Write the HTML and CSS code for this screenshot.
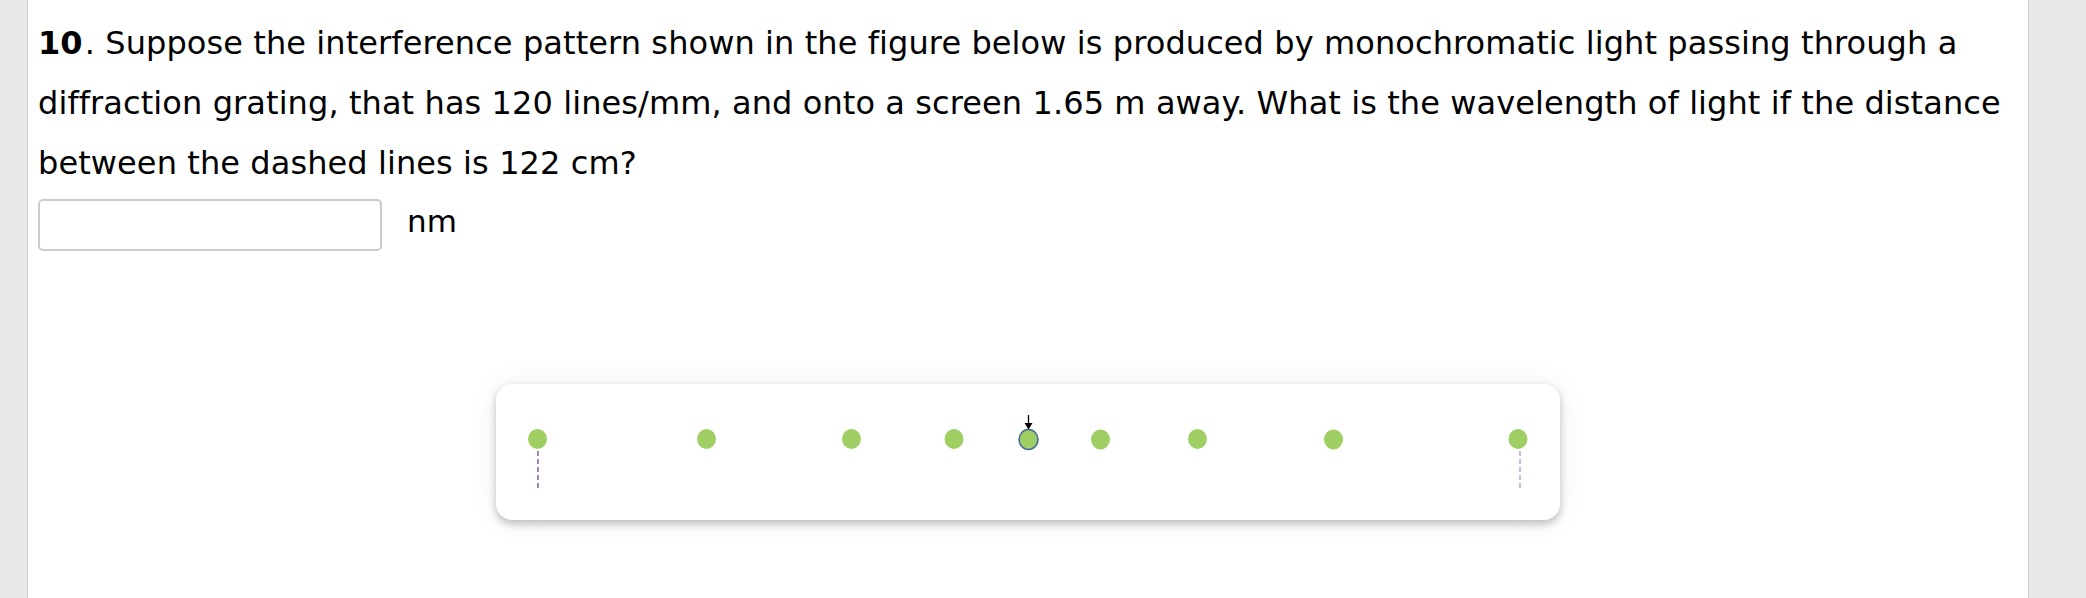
FILE: index.html
```html
<!DOCTYPE html>
<html lang="en">
<head>
<meta charset="utf-8">
<title>Question 10</title>
<link rel="stylesheet" href="styles.css">
</head>
<body class="page">
  <aside class="gutter gutter-left"></aside>
  <main class="content">
    <p class="question"><b class="qnum">10</b>. Suppose the interference pattern shown in the figure below is produced by monochromatic light passing through a diffraction grating, that has 120 lines/mm, and onto a screen 1.65 m away. What is the wavelength of light if the distance between the dashed lines is 122 cm?</p>
    <div class="answer">
      <input class="answer-input" type="text" aria-label="answer">
      <span class="unit">nm</span>
    </div>
    <figure class="figure-card">
      <svg class="pattern" width="1064" height="136" viewBox="0 0 1064 136">
        <line x1="42" y1="67" x2="42" y2="105" stroke="#6b4791" stroke-width="1.3" stroke-dasharray="5 3"/>
        <line x1="1024" y1="67" x2="1024" y2="105" stroke="#ad93d2" stroke-width="1.3" stroke-dasharray="5 3"/>
        <g fill="#9fcf62">
          <ellipse cx="41.5" cy="55" rx="9.5" ry="10"/>
          <ellipse cx="210.5" cy="55" rx="9.5" ry="10"/>
          <ellipse cx="355.5" cy="55" rx="9.5" ry="10"/>
          <ellipse cx="458" cy="55" rx="9.5" ry="10"/>
          <ellipse cx="604.5" cy="55.5" rx="9.5" ry="10"/>
          <ellipse cx="701.5" cy="55" rx="9.5" ry="10"/>
          <ellipse cx="837.5" cy="55.5" rx="9.5" ry="10"/>
          <ellipse cx="1022" cy="55" rx="9.5" ry="10"/>
        </g>
        <ellipse cx="532.5" cy="55.5" rx="9.5" ry="10" fill="#9fcf62" stroke="#4b6a9e" stroke-width="1.6"/>
        <line x1="532.5" y1="31" x2="532.5" y2="40" stroke="#000" stroke-width="1.3"/>
        <polygon points="528.5,39 536.5,39 532.5,45.5" fill="#000"/>
      </svg>
    </figure>
  </main>
  <aside class="gutter gutter-right"></aside>
</body>
</html>
```

FILE: styles.css
```css
html, body {
  margin: 0;
  padding: 0;
  height: 100%;
}

.page {
  display: flex;
  min-height: 598px;
  background: #ffffff;
  font-family: "DejaVu Sans", Verdana, sans-serif;
  color: #000;
}

.gutter {
  background: #e8e8e8;
  flex: 0 0 auto;
}

.gutter-left {
  width: 27px;
  border-right: 1px solid #c9d1cf;
}

.gutter-right {
  flex: 1 1 auto;
  border-left: 1px solid #c9d1cf;
}

.content {
  width: 2000px;
  box-sizing: border-box;
  padding: 13px 10px 0 10px;
  background: #fff;
}

.question {
  margin: 0;
  font-size: 32px;
  line-height: 60px;
  letter-spacing: 0.09px;
}

.qnum {
  font-weight: bold;
  margin-right: 2px;
}

.answer {
  display: flex;
  align-items: center;
  margin-top: 6px;
}

.answer-input {
  box-sizing: border-box;
  width: 344px;
  height: 52px;
  border: 2px solid #cbcbcb;
  border-radius: 5px;
  background: #fff;
  margin: 0;
  padding: 0 10px;
  font: inherit;
}

.unit {
  margin-left: 25px;
  font-size: 31px;
  line-height: 40px;
  position: relative;
  top: -4px;
}

.figure-card {
  width: 1064px;
  height: 136px;
  margin: 133px auto 0 auto;
  background: #fff;
  border-radius: 16px;
  box-shadow: 0 4px 9px rgba(0, 0, 0, 0.24), 0 0 30px rgba(0, 0, 0, 0.06);
}

.pattern {
  display: block;
}
```
